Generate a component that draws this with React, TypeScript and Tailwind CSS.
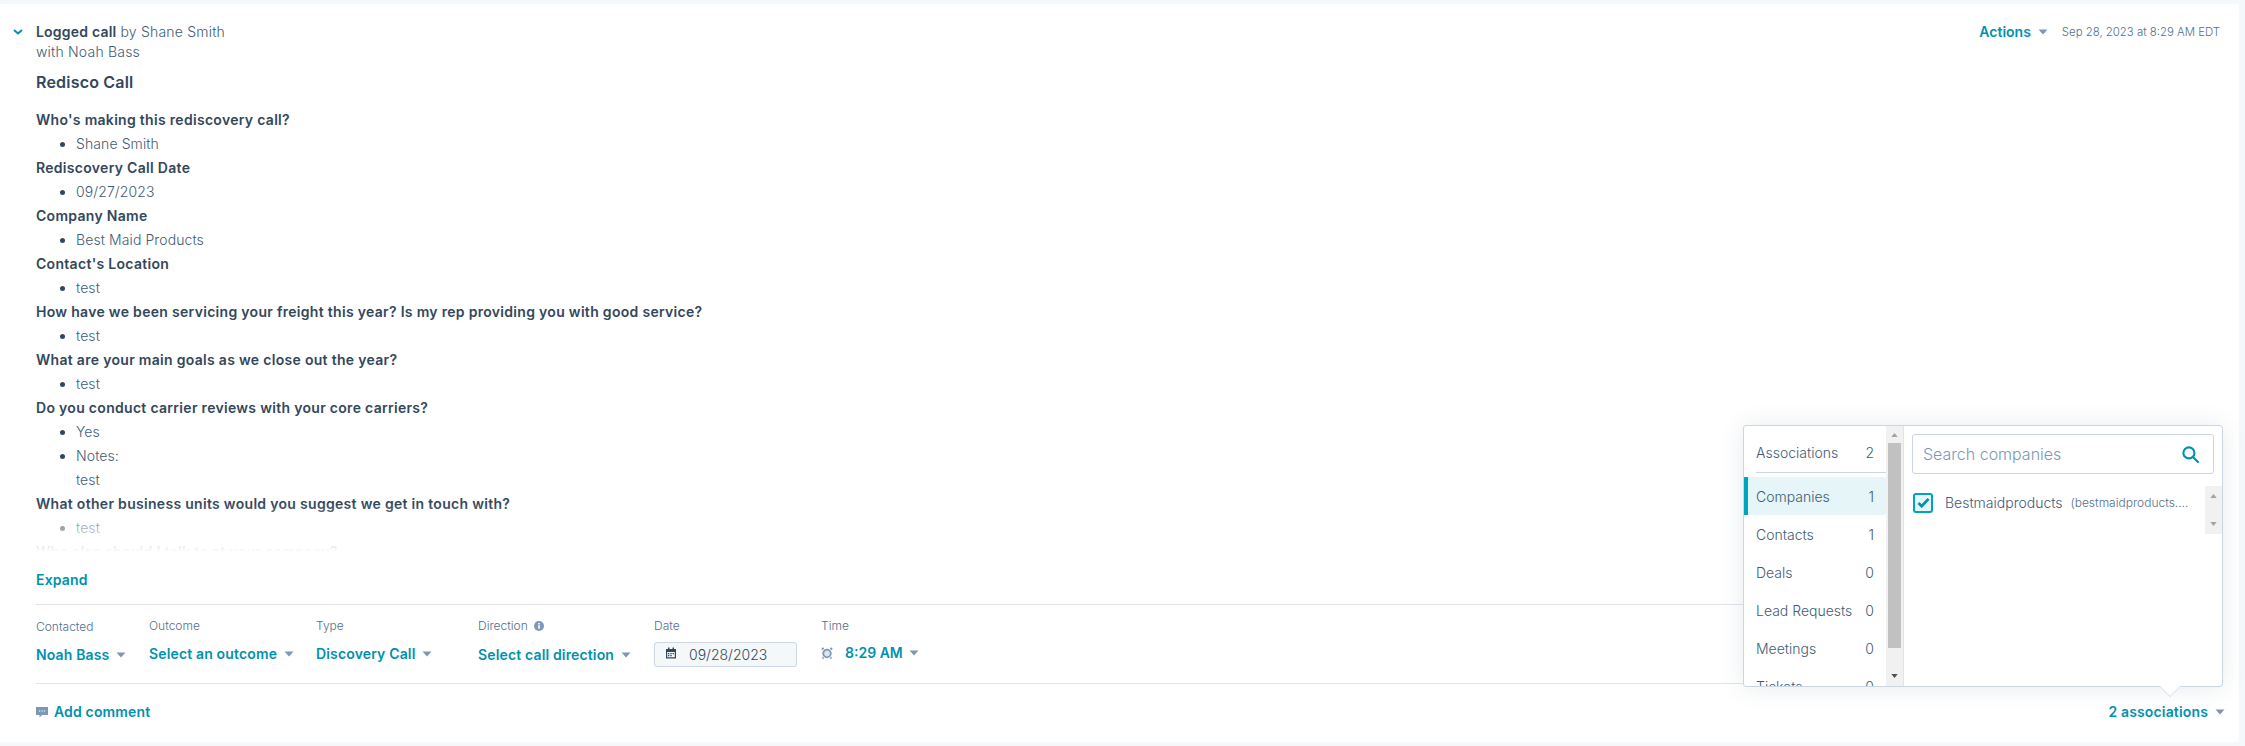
const Caret = ({ className = "" }: { className?: string }) => (
  <svg viewBox="0 0 10 6" className={"w-[10px] h-[6px] fill-[#7c98b6] " + className}>
    <path d="M0.5 0.5h9L5 5.5z" />
  </svg>
)

const questions = [
  { q: "Who's making this rediscovery call?", a: ["Shane Smith"] },
  { q: "Rediscovery Call Date", a: ["09/27/2023"] },
  { q: "Company Name", a: ["Best Maid Products"] },
  { q: "Contact's Location", a: ["test"] },
  { q: "How have we been servicing your freight this year? Is my rep providing you with good service?", a: ["test"] },
  { q: "What are your main goals as we close out the year?", a: ["test"] },
  { q: "Do you conduct carrier reviews with your core carriers?", a: ["Yes", "Notes:"], extra: "test" },
  { q: "What other business units would you suggest we get in touch with?", a: ["test"] },
  { q: "Who else should I talk to at your company?", a: [] },
]

const objects = [
  { name: "Contacts", count: 1 },
  { name: "Deals", count: 0 },
  { name: "Lead Requests", count: 0 },
  { name: "Meetings", count: 0 },
  { name: "Tickets", count: 0 },
]

const labelStyle = "text-[12px] leading-[18px] text-[#516f90] font-light"
const linkBase = "text-[14px] leading-[20px] font-semibold text-[#0091ae]"
const linkStyle = linkBase + " tracking-[0.15px]"

const Popover = () => (
  <div className="absolute left-[1743px] top-[421px] w-[480px] h-[262px] bg-white border border-[#cbd6e2] rounded-[3px] shadow-[0_1px_24px_0_rgba(66,91,118,0.12)] flex">
    <div className="w-[142px] h-full overflow-hidden text-[14px] text-[#425b76] font-light">
      <div className="h-[47px] ml-[12px] pt-[17px] flex justify-between pr-[12px] border-b border-[#cbd6e2]">
        <span className="leading-[20px]">Associations</span>
        <span className="leading-[20px]">2</span>
      </div>
      <div className="mt-[4px] h-[38px] bg-[#e5f5f8] rounded-r-[3px] border-l-4 border-[#00a4bd] pl-[8px] pr-[12px] flex items-center justify-between">
        <span>Companies</span>
        <span>1</span>
      </div>
      {objects.map(item => (
        <div key={item.name} className="h-[38px] pl-[12px] pr-[12px] flex items-center justify-between">
          <span>{item.name}</span>
          <span>{item.count}</span>
        </div>
      ))}
    </div>

    <div className="w-[17px] h-full bg-[#f1f1f1] flex flex-col items-center">
      <svg viewBox="0 0 8 5" className="w-[7px] h-[4px] mt-[7px] fill-[#a3a3a3]"><path d="M4 0l4 5H0z" /></svg>
      <div className="w-[13px] h-[205px] mt-[6px] bg-[#c1c1c1]"></div>
      <svg viewBox="0 0 8 5" className="w-[7px] h-[4px] mt-[26px] fill-[#505050]"><path d="M0 0h8L4 5z" /></svg>
    </div>

    <div className="flex-1 border-l border-[#dfe3eb] relative">
      <div className="mx-[8px] mt-[8px] h-[40px] w-[302px] border border-[#cbd6e2] rounded-[3px] flex items-center justify-between pl-[10px] pr-[14px]">
        <span className="text-[16px] text-[#7c98b6] font-light">Search companies</span>
        <svg viewBox="0 0 16 16" className="w-[17px] h-[17px] fill-none stroke-[#0091ae] stroke-2">
          <circle cx="6.5" cy="6.5" r="5.2" />
          <path d="M10.5 10.5L15 15" strokeLinecap="round" />
        </svg>
      </div>
      <div className="mt-[18px] ml-[9px] flex items-center">
        <div className="w-[20px] h-[20px] border-2 border-[#00a4bd] rounded-[3px] bg-[#e5f5f8] flex items-center justify-center">
          <svg viewBox="0 0 14 12" className="w-[13px] h-[11px] fill-none stroke-[#0091ae] stroke-[3]">
            <path d="M1.5 6.5l3.5 3.5L12.5 2" />
          </svg>
        </div>
        <span className="ml-[12px] text-[14px] text-[#425b76] font-light">Bestmaidproducts</span>
        <span className="ml-[8px] text-[12px] text-[#516f90] font-light">(bestmaidproducts....</span>
      </div>
      <div className="absolute right-0 top-[60px] w-[17px] h-[48px] bg-[#f1f1f1] flex flex-col items-center justify-between py-[8px]">
        <svg viewBox="0 0 8 5" className="w-[7px] h-[4px] fill-[#a3a3a3]"><path d="M4 0l4 5H0z" /></svg>
        <svg viewBox="0 0 8 5" className="w-[7px] h-[4px] fill-[#a3a3a3]"><path d="M0 0h8L4 5z" /></svg>
      </div>
    </div>

    <div className="absolute left-[418px] bottom-[-8px] w-[16px] h-[16px] rotate-45 bg-white border-r border-b border-[#dfe3eb]"></div>
  </div>
)

export default function App() {
  return (
    <div className="w-[2245px] h-[746px] bg-[#f5f8fa] pt-[4px] overflow-hidden font-['Inter',sans-serif] text-[#33475b]">
      <div className="relative w-[2239px] h-[738px] bg-white rounded-[3px] pl-[36px] pr-[20px] pt-[18px]">

        <div className="flex justify-between">
          <div className="relative text-[14px] leading-[20px] tracking-[0.2px]">
            <svg viewBox="0 0 10 6" className="absolute left-[-23px] top-[7px] w-[10px] h-[6px] fill-none stroke-[#0091ae] stroke-2">
              <path d="M1 1l4 3.5L9 1" />
            </svg>
            <div><span className="font-semibold">Logged call</span> <span className="font-light text-[#425b76]">by Shane Smith</span></div>
            <div className="font-light text-[#425b76]">with Noah Bass</div>
          </div>
          <div className="flex items-start">
            <div className={linkBase + " flex items-center"}>
              Actions
              <Caret className="ml-[7px]" />
            </div>
            <div className="ml-[14px] mr-[-1px] text-[11.4px] leading-[20px] text-[#516f90] font-light">Sep 28, 2023 at 8:29 AM EDT</div>
          </div>
        </div>

        <div className="mt-[8px] text-[16px] leading-[24px] font-semibold tracking-[0.2px]">Redisco Call</div>

        <div className="relative mt-[14px] h-[444px] overflow-hidden text-[14px] leading-[24px]">
          {questions.map(item => (
            <div key={item.q}>
              <div className="font-semibold tracking-[0.3px]">{item.q}</div>
              <ul className="list-disc pl-[40px] m-0 text-[#425b76] font-light marker:text-[#33475b] tracking-[0.1px]">
                {item.a.map(answer => <li key={answer} className="h-[24px]">{answer}</li>)}
              </ul>
              {item.extra && <div className="pl-[40px] text-[#425b76] font-light">{item.extra}</div>}
            </div>
          ))}
          <div className="absolute left-0 right-0 bottom-0 h-[48px] bg-gradient-to-b from-transparent to-white"></div>
        </div>

        <div className={"mt-[18px] " + linkStyle}>Expand</div>

        <div className="mt-[14px] border-t border-[#dfe3eb] pt-[12px] pb-[16px] flex h-[79px]">
          <div className="w-[113px]">
            <div className={labelStyle + " mt-[1px]"}>Contacted</div>
            <div className={linkStyle + " mt-[9px] flex items-center"}>Noah Bass<Caret className="ml-[7px]" /></div>
          </div>
          <div className="w-[167px]">
            <div className={labelStyle}>Outcome</div>
            <div className={linkStyle + " mt-[9px] flex items-center"}>Select an outcome<Caret className="ml-[7px]" /></div>
          </div>
          <div className="w-[162px]">
            <div className={labelStyle}>Type</div>
            <div className={linkStyle + " mt-[9px] flex items-center"}>Discovery Call<Caret className="ml-[7px]" /></div>
          </div>
          <div className="w-[176px]">
            <div className={labelStyle + " flex items-center"}>
              Direction
              <svg viewBox="0 0 10 10" className="ml-[6px] w-[10px] h-[10px]">
                <circle cx="5" cy="5" r="5" fill="#7c98b6" />
                <rect x="4.2" y="4.2" width="1.6" height="3.6" fill="#fff" />
                <rect x="4.2" y="2" width="1.6" height="1.5" fill="#fff" />
              </svg>
            </div>
            <div className={linkStyle + " mt-[10px] flex items-center"}>Select call direction<Caret className="ml-[7px]" /></div>
          </div>
          <div className="w-[167px]">
            <div className={labelStyle}>Date</div>
            <div className="mt-[7px] w-[143px] h-[25px] bg-[#f5f8fa] border border-[#cbd6e2] rounded-[3px] flex items-center pl-[10px]">
              <svg viewBox="0 0 12 12" className="w-[12px] h-[12px] mt-[-3px] fill-[#33475b]">
                <path d="M1 2h2V0.5h1.5V2h3V0.5H9V2h2v9.5H1zM2.2 5v5.3h7.6V5z" />
                <path d="M3 6h1.4v1.2H3zM5.3 6h1.4v1.2H5.3zM7.6 6H9v1.2H7.6zM3 8h1.4v1.2H3zM5.3 8h1.4v1.2H5.3z" />
              </svg>
              <span className="ml-[12px] text-[14px] text-[#33475b] font-light">09/28/2023</span>
            </div>
          </div>
          <div>
            <div className={labelStyle}>Time</div>
            <div className="mt-[8px] flex items-center">
              <svg viewBox="0 0 12 12" className="w-[12px] h-[12px] fill-[#dfe3eb] stroke-[#7c98b6] stroke-[1.8]">
                <circle cx="6" cy="6.5" r="3.8" />
                <path d="M0.8 2.6L2.6 0.9M11.2 2.6L9.4 0.9M2.5 10.5L1.5 11.5M9.5 10.5l1 1" />
              </svg>
              <span className={linkBase + " ml-[12px]"}>8:29 AM</span>
              <Caret className="ml-[6px]" />
            </div>
          </div>
        </div>

        <div className="border-t border-[#dfe3eb] pt-[18px] flex justify-between">
          <div className={linkStyle + " flex items-center"}>
            <svg viewBox="0 0 12 11" className="w-[12px] h-[11px] mr-[6px] fill-[#7c98b6]">
              <path d="M0 0h12v8H6l-2.5 2.5V8H0z" />
              <path d="M3 3.4h1.2v1.2H3zM5.4 3.4h1.2v1.2H5.4zM7.8 3.4H9v1.2H7.8z" fill="#fff" />
            </svg>
            Add comment
          </div>
          <div className={linkStyle + " flex items-center mr-[-6px]"}>
            2 associations
            <Caret className="ml-[7px]" />
          </div>
        </div>

        <Popover />
      </div>
    </div>
  )
}
